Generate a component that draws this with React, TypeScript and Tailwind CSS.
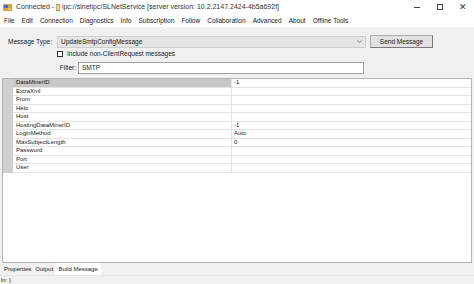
import React from 'react';

const rows: [string, string][] = [
  ['DataMinerID', '-1'],
  ['ExtraXml', ''],
  ['From', ''],
  ['Helo', ''],
  ['Host', ''],
  ['HostingDataMinerID', '-1'],
  ['LoginMethod', 'Auto'],
  ['MaxSubjectLength', '0'],
  ['Password', ''],
  ['Port', ''],
  ['User', ''],
];

const menu = ['File', 'Edit', 'Connection', 'Diagnostics', 'Info', 'Subscription', 'Follow', 'Collaboration', 'Advanced', 'About', 'Offline Tools'];

function AppIcon() {
  return (
    <svg width="9" height="9" viewBox="0 0 9 9">
      <rect x="0" y="1" width="9" height="7" fill="#d9a441" />
      <rect x="1" y="2" width="4" height="3" fill="#3a6fc4" />
      <rect x="5" y="5" width="3" height="2" fill="#e8c36a" />
    </svg>
  );
}

export default function App() {
  return (
    <div className="w-[474px] h-[284px] flex flex-col bg-[#f0f0f0] text-[#1a1a1a] overflow-hidden" style={{ fontFamily: '"Liberation Sans", Arial, sans-serif' }}>
      {/* title bar */}
      <div className="h-[14px] bg-white flex items-center shrink-0">
        <div className="pl-[3px] pr-[4px] flex items-center"><AppIcon /></div>
        <span className="text-[7px] text-[#333]">Connected - [] ipc://slnetipc/SLNetService [server version: 10.2.2147.2424-4b5a692f]</span>
        <div className="ml-auto flex items-center h-full text-[#333]">
          <div className="w-[23px] flex justify-center"><div className="w-[6px] h-px bg-[#444]" /></div>
          <div className="w-[23px] flex justify-center"><div className="w-[6px] h-[6px] border border-[#444]" /></div>
          <div className="w-[23px] flex justify-center text-[9px] leading-none font-light">✕</div>
        </div>
      </div>
      {/* menu */}
      <div className="h-[13px] bg-white flex items-center text-[6.5px] pl-[4px] gap-[7.1px] shrink-0">
        {menu.map((m) => (
          <span key={m}>{m}</span>
        ))}
      </div>
      <div className="h-px bg-[#f4f4f4] shrink-0" />
      {/* top panel */}
      <div className="h-[50px] shrink-0 flex flex-col pt-[7px] text-[6.5px]">
        <div className="flex items-center h-[13px]">
          <span className="pl-[8px] w-[57px] whitespace-nowrap">Message Type:</span>
          <div className="w-[309px] h-[12px] bg-[#e5e5e5] border border-[#cfcfcf] flex items-center px-[3px]">
            <span>UpdateSmtpConfigMessage</span>
            <svg className="ml-auto" width="5" height="3" viewBox="0 0 5 3"><path d="M0.5 0.5 L2.5 2.5 L4.5 0.5" fill="none" stroke="#555" strokeWidth="0.7" /></svg>
          </div>
          <div className="ml-[4px] w-[63px] h-[13px] bg-[#e1e1e1] border border-[#adadad] border-r-[#7a7a7a] border-b-[#7a7a7a] flex items-center justify-center">Send Message</div>
        </div>
        <div className="flex items-center pl-[57px] h-[12px]">
          <div className="w-[6px] h-[6px] bg-white border border-[#333]" />
          <span className="ml-[4px]">Include non-ClientRequest messages</span>
        </div>
        <div className="flex items-center mt-[2px] h-[12px]">
          <span className="w-[78px] pr-[2px] flex justify-end whitespace-nowrap">Filter:</span>
          <div className="w-[286px] h-[12px] bg-white border border-[#a0a0a0] flex items-center px-[3px]">SMTP</div>
        </div>
      </div>
      {/* grid */}
      <div className="flex-1 mx-[2px] bg-white border border-[#b4b4b4] flex flex-col text-[6px] min-h-0">
        {rows.map(([k, v], i) => (
          <div key={k} className="flex h-[8.5px]">
            <div className="w-[10px] bg-[#cfcfcf] shrink-0" />
            <div className={`w-[219px] flex items-center pl-[3px] border-r border-b border-[#e3e3e3] ${i === 0 ? 'bg-[#c8c8c8]' : 'bg-white'}`}>{k}</div>
            <div className="flex-1 flex items-center pl-[2px] border-b border-[#e3e3e3]">{v}</div>
          </div>
        ))}
      </div>
      {/* tabs */}
      <div className="h-[12px] shrink-0 flex items-end text-[6px] pl-[2px]">
        <div className="px-[2px] h-[11px] flex items-center">Properties</div>
        <div className="px-[2px] h-[11px] flex items-center">Output</div>
        <div className="px-[3px] h-[12px] flex items-center bg-white">Build Message</div>
      </div>
      {/* status */}
      <div className="h-[9px] shrink-0 flex items-center text-[6px] bg-[#f0f0f0] border-t border-[#e6e6e6]">
        <span className="pl-px">{'ln: }'}</span>
      </div>
    </div>
  );
}
